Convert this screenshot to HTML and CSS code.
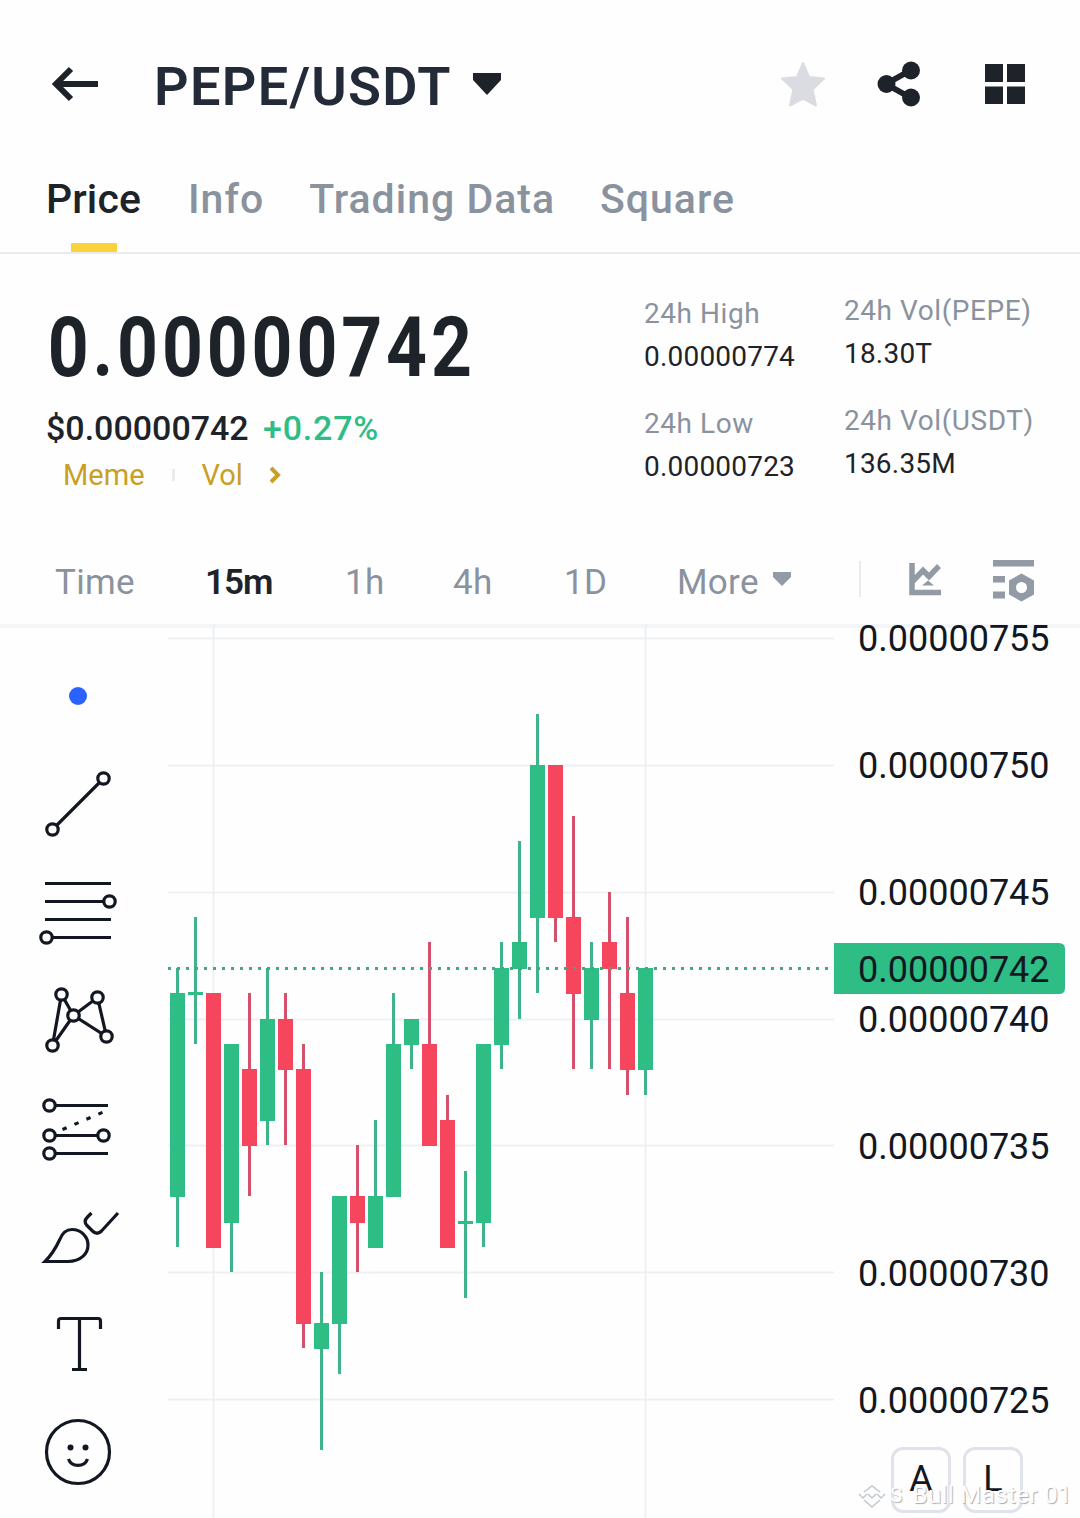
FILE: index.html
```html
<!DOCTYPE html>
<html lang="en">
  <head>
    <meta charset="UTF-8" />
    <meta name="viewport" content="width=device-width, initial-scale=1.0" />
    <title>PEPE/USDT</title>
    <link rel="stylesheet" href="styles.css" />
  </head>
  <body>
    <header class="header">
      <svg class="back" viewBox="0 0 46 38">
        <path d="M19 4 4 19l15 15M4 19h42" />
      </svg>
      <h1>PEPE/USDT</h1>
      <svg class="caret" viewBox="0 0 28 22">
        <path d="M0 0h28v7L14 22 0 7z" />
      </svg>
      <div class="actions">
        <svg class="star" viewBox="0 0 46 46">
          <path d="m23 2 6 14 15 1.500-11.500 11L36 44.500 23 37.500 10 44.500l3.500-16L2 17.500 17 16z" />
        </svg>
        <svg class="share" viewBox="0 0 44 46">
          <path d="M9 23 34 9M9 23l25 14" />
          <circle cx="9.500" cy="23" r="9" />
          <circle cx="34" cy="9.500" r="9" />
          <circle cx="34" cy="36.500" r="9" />
        </svg>
        <svg class="apps" viewBox="0 0 40 40">
          <path d="M0 0h18v18H0zM22 0h18v18H22zM0 22.500h18V40H0zM22 22.500h18V40H22z" />
        </svg>
      </div>
    </header>

    <nav class="tabs">
      <a class="active">Price</a>
      <a>Info</a>
      <a>Trading Data</a>
      <a>Square</a>
    </nav>

    <section class="ticker">
      <div class="summary">
        <div class="price">0.00000742</div>
        <div class="fiat">
          <span class="usd">$0.00000742</span>
          <span class="change">+0.27%</span>
        </div>
        <div class="tags">
          <span>Meme</span>
          <i></i>
          <span>Vol</span>
          <svg viewBox="0 0 12 18"><path d="m2 2 7 7-7 7" /></svg>
        </div>
      </div>
      <dl class="stats">
        <dt>24h High</dt>
        <dd>0.00000774</dd>
        <dt>24h Low</dt>
        <dd>0.00000723</dd>
      </dl>
      <dl class="stats volume">
        <dt>24h Vol(PEPE)</dt>
        <dd>18.30T</dd>
        <dt>24h Vol(USDT)</dt>
        <dd>136.35M</dd>
      </dl>
    </section>

    <nav class="intervals">
      <a class="time">Time</a>
      <a class="m15 active">15m</a>
      <a class="h1">1h</a>
      <a class="h4">4h</a>
      <a class="d1">1D</a>
      <a class="more">More</a>
      <svg class="more-caret" viewBox="0 0 18 14"><path d="M0 0h18v5l-9 9-9-9z" /></svg>
      <i></i>
      <svg class="indicator" viewBox="0 0 32 33">
        <path class="line" d="M3 0v29.500h29M4 18 14 7.500l6 6L30 3" />
        <path d="m19 17.500 6 5H13z" />
      </svg>
      <svg class="settings" viewBox="0 0 42 42">
        <path d="M0 0h41v6.500H0zM0 16h12v6.500H0zM0 31.500h12v7H0z" />
        <path fill-rule="evenodd" d="m28.500 13.500 12.500 7v14L28.500 41.500 16 34.500v-14zm0 8.500a5.500 5.500 0 1 0 0 11 5.500 5.500 0 0 0 0-11z" />
      </svg>
    </nav>

    <main class="chart">
      <div class="tools">
        <svg viewBox="0 0 84 84"><circle class="dot" cx="42" cy="42" r="9" /></svg>
        <svg viewBox="0 0 84 84">
          <path d="m16.500 67.500 51-51" />
          <circle cx="16.500" cy="67.500" r="5.700" />
          <circle cx="67.500" cy="16.500" r="5.700" />
        </svg>
        <svg viewBox="0 0 84 84">
          <path d="M9 13.500h66M9 31.500h66M9 49.500h66M9 67.500h66" />
          <circle cx="73.500" cy="31.500" r="5.700" />
          <circle cx="10.500" cy="67.500" r="5.700" />
        </svg>
        <svg viewBox="0 0 84 84">
          <path d="m16.500 67.500 9-51 12 21 24-18 9 39-33-21z" />
          <circle cx="25.500" cy="16.500" r="5.700" />
          <circle cx="61.500" cy="19.500" r="5.700" />
          <circle cx="37.500" cy="37.500" r="5.700" />
          <circle cx="16.500" cy="67.500" r="5.700" />
          <circle cx="70.500" cy="58.500" r="5.700" />
        </svg>
        <svg viewBox="0 0 84 84">
          <path d="M13.500 19.500H72M13.500 49.500h54M13.500 67.500H72" />
          <path stroke-dasharray="4.500 8.500" d="m26.500 43.500 42-18" />
          <circle cx="13.500" cy="19.500" r="5.700" />
          <circle cx="13.500" cy="49.500" r="5.700" />
          <circle cx="67.500" cy="49.500" r="5.700" />
          <circle cx="13.500" cy="67.500" r="5.700" />
        </svg>
        <svg viewBox="0 0 84 84">
          <path d="M9 67.500c8-8 11.500-15 14.500-21.500 2.500-6.500 7-10.500 12.500-10.500 9 0 16 7 16 15.500S45 67.500 32 67.500z" />
          <path d="m55.500 19-4 4c-3 3-3 6-.5 8.500l5.500 5.500c3 3 6 3 9 0L82 19" />
        </svg>
        <svg viewBox="0 0 84 84">
          <path d="M22.500 27v-8q0-2.500 2.500-2.500h37q2.500 0 2.500 2.500v8M43.500 16.500v51M36 67.500h15" />
        </svg>
        <svg viewBox="0 0 84 84">
          <circle cx="42" cy="42" r="31.500" />
          <circle class="eye" cx="34.500" cy="37.500" r="3" />
          <circle class="eye" cx="49.500" cy="37.500" r="3" />
          <path d="M32.500 49c3 8.500 16 8.500 19 0" />
        </svg>
      </div>
      <svg class="plot" width="912" height="894" viewBox="0 0 912 894"></svg>
      <div class="scale">
        <button type="button">A</button>
        <button type="button">L</button>
      </div>
      <div class="watermark">
        <svg viewBox="0 0 28 24">
          <path d="m6 7 8-6 8 6M1 9l4 4 4-4M10 9l4 4 4-4M19 9l4 4 4-4M6 15l8 7 8-7" />
        </svg>
        <small>S</small>
        <span>Bull Master 01</span>
      </div>
    </main>

    <script src="script.js"></script>
  </body>
</html>
```
FILE: styles.css
```css
:root {
  --ink: #1e2329;
  --muted: #8a929e;
  --green: #2ebd85;
  --red: #f6465d;
  --gold: #c99f25;
}

* {
  box-sizing: border-box;
}

body {
  margin: 0;
  width: 1080px;
  height: 1518px;
  overflow: hidden;
  background: #fefefe;
  color: var(--ink);
  font-family: Roboto, sans-serif;
}

svg {
  display: block;
  flex: none;
}

/* Header */

.header {
  display: flex;
  align-items: center;
  height: 168px;
  padding: 0 55px 0 52px;
}

.back {
  width: 46px;
  height: 38px;
  fill: none;
  stroke: var(--ink);
  stroke-width: 6;
}

.header h1 {
  margin: 5px 0 0 56px;
  width: 319px;
  font-size: 54px;
  font-weight: 600;
  line-height: 64px;
  letter-spacing: 1.3px;
  color: #242b38;
}

.caret {
  width: 28px;
  height: 22px;
  fill: var(--ink);
}

.actions {
  display: flex;
  align-items: center;
  margin-left: auto;
}

.star {
  width: 46px;
  height: 46px;
  fill: #dadce1;
  stroke: #dadce1;
  stroke-width: 2;
  stroke-linejoin: round;
}

.share {
  width: 44px;
  height: 46px;
  margin: 0 64px 0 51px;
  fill: var(--ink);
  stroke: none;
}

.share path {
  stroke: var(--ink);
  stroke-width: 6;
}

.apps {
  width: 40px;
  height: 40px;
  fill: var(--ink);
}

/* Tabs */

.tabs {
  display: flex;
  gap: 45px;
  height: 86px;
  padding-left: 46px;
  border-bottom: 2px solid #eaebec;
}

.tabs a {
  font-size: 41px;
  font-weight: 500;
  line-height: 63px;
  letter-spacing: 1px;
  color: var(--muted);
}

.tabs .active {
  display: flex;
  flex-direction: column;
  justify-content: space-between;
  width: 97px;
  letter-spacing: 0.1px;
  color: var(--ink);
}

.tabs .active::after {
  content: "";
  width: 46px;
  height: 9px;
  margin-left: 25px;
  border-radius: 1px;
  background: #fad33c;
}

/* Ticker */

.ticker {
  display: flex;
  height: 286px;
}

.summary {
  width: 644px;
  padding: 49px 0 0 46px;
}

.price {
  padding-left: 2px;
  font-size: 83px;
  font-weight: 700;
  line-height: 90px;
  letter-spacing: 4.5px;
  transform: scaleX(0.86);
  transform-origin: left;
}

.fiat {
  display: flex;
  margin-top: 11px;
  font-size: 34px;
  font-weight: 500;
  line-height: 48px;
}

.usd {
  width: 217px;
}

.change {
  letter-spacing: 0.8px;
  color: var(--green);
}

.tags {
  display: flex;
  align-items: center;
  padding: 1px 0 0 17px;
  font-size: 29px;
  line-height: 45px;
  color: var(--gold);
}

.tags i {
  width: 3px;
  height: 12px;
  margin: -2px 27px 0 27px;
  background: #eaebec;
}

.tags svg {
  width: 12px;
  height: 18px;
  margin: -2px 0 0 26px;
  fill: none;
  stroke: var(--gold);
  stroke-width: 4;
}

.stats {
  width: 200px;
  margin: 0;
  padding-top: 38px;
  font-size: 28px;
  line-height: 43px;
  letter-spacing: 0.2px;
  white-space: nowrap;
}

.stats.volume {
  padding-top: 35px;
}

.stats dt {
  letter-spacing: 0.55px;
  color: var(--muted);
}

.stats dd {
  margin: 0 0 24px;
}

/* Intervals */

.intervals {
  display: flex;
  align-items: center;
  height: 84px;
  padding-left: 55px;
  font-size: 35px;
  letter-spacing: 0.3px;
  color: var(--muted);
  fill: #929aa5;
}

.intervals .active {
  font-weight: 600;
  letter-spacing: -1px;
  color: var(--ink);
}

.time {
  width: 150px;
}

.m15 {
  width: 140px;
}

.h1 {
  width: 108px;
}

.h4 {
  width: 111px;
}

.d1 {
  width: 113px;
}

.more {
  width: 96px;
}

.more-caret {
  width: 18px;
  height: 14px;
  margin-top: -7px;
}

.intervals i {
  width: 2px;
  height: 36px;
  margin: -6px 48px 0 68px;
  background: #eaebec;
}

.indicator {
  width: 32px;
  height: 33px;
  margin-top: -6px;
}

.indicator .line {
  fill: none;
  stroke: #929aa5;
  stroke-width: 5.5;
}

.settings {
  width: 42px;
  height: 42px;
  margin: -3px 0 0 52px;
}

/* Chart */

.chart {
  position: relative;
  display: flex;
  height: 894px;
  box-shadow: inset 0 4px #f4f5f6;
}

.tools {
  width: 168px;
  padding: 18px 0 0 36px;
}

.tools svg {
  width: 84px;
  height: 84px;
  margin: 12px 0 24px;
  fill: none;
  stroke: #131722;
  stroke-width: 3.2;
}

.tools circle {
  fill: #fefefe;
}

.tools .dot {
  fill: #2962ff;
  stroke: none;
}

.tools .eye {
  fill: #131722;
  stroke: none;
}

.plot .grid {
  stroke: #eef0f1;
  stroke-width: 2;
}

.plot .up {
  fill: var(--green);
}

.plot .down {
  fill: var(--red);
}

.plot .wick.up {
  fill: #3fb389;
}

.plot .wick.down {
  fill: #d5506a;
}

.plot .last {
  stroke: #3fa982;
  stroke-width: 3;
  stroke-dasharray: 3 6;
}

.plot text {
  font-size: 36px;
  fill: #131722;
}

.scale {
  position: absolute;
  right: 57px;
  bottom: 5px;
  display: flex;
  gap: 12px;
}

.scale button {
  width: 60px;
  height: 66px;
  padding: 0 0 2px;
  border: 3px solid #e0e3eb;
  border-radius: 12px;
  background: #fefefe;
  color: #131722;
  font: 36px Roboto, sans-serif;
}

.watermark {
  position: absolute;
  right: 8px;
  bottom: 8px;
  display: flex;
  align-items: center;
  color: #fff;
  font-size: 24px;
  line-height: 30px;
  letter-spacing: 0.4px;
  text-shadow: 1px 1px 1px #a9adb3;
}

.watermark svg {
  width: 28px;
  height: 24px;
  margin: 4px 4px 0 0;
  fill: none;
  stroke: #c3c6cb;
  stroke-width: 1.5;
}

.watermark small {
  margin-right: 10px;
  font-size: 20px;
}
```
FILE: script.js
```js
const plot = document.querySelector(".plot");

// open, close, high, low (last three digits of the price)
const candles = [
  [733, 741, 742, 731],
  [741, 741, 744, 739],
  [741, 731, 741, 731],
  [732, 739, 739, 730],
  [738, 735, 741, 733],
  [736, 740, 742, 735],
  [740, 738, 741, 735],
  [738, 728, 739, 727],
  [727, 728, 730, 723],
  [728, 733, 733, 726],
  [733, 732, 735, 730],
  [731, 733, 736, 731],
  [733, 739, 741, 733],
  [739, 740, 740, 738],
  [739, 735, 743, 735],
  [736, 731, 737, 731],
  [732, 732, 734, 729],
  [732, 739, 739, 731],
  [739, 742, 743, 738],
  [742, 743, 747, 740],
  [744, 750, 752, 741],
  [750, 744, 750, 743],
  [744, 741, 748, 738],
  [740, 742, 743, 738],
  [743, 742, 745, 738],
  [741, 738, 744, 737],
  [738, 742, 742, 737],
];

const y = (price) => Math.round(14 + (755 - price) * 25.37);

let markup = "";

for (let p = 755; p >= 725; p -= 5) {
  markup += `<path class="grid" d="M0 ${y(p) + 0.5}H666" />`;
  markup += `<text x="690" y="${27 + (755 - p) * 25.4}">0.00000${p}</text>`;
}

markup += `<path class="grid" d="M45.500 0V894M477.500 0V894" />`;

candles.forEach(([open, close, high, low], i) => {
  const x = 2 + i * 18;
  const side = close >= open ? "up" : "down";
  const top = y(Math.max(open, close)) - (open === close ? 1 : 0);
  const height = y(Math.min(open, close)) - top + (open === close ? 2 : 1);
  markup += `<rect class="wick ${side}" x="${x + 6}" y="${y(high)}" width="3" height="${y(low) - y(high)}" />`;
  markup += `<rect class="${side}" x="${x}" y="${top}" width="15" height="${height}" />`;
});

markup += `<path class="last" d="M0 344.500H666" />`;
markup += `<path class="up" d="M666 319h225q6 0 6 6v39q0 6-6 6H666z" />`;
markup += `<text x="690" y="358">0.00000742</text>`;

plot.innerHTML = markup;
```
